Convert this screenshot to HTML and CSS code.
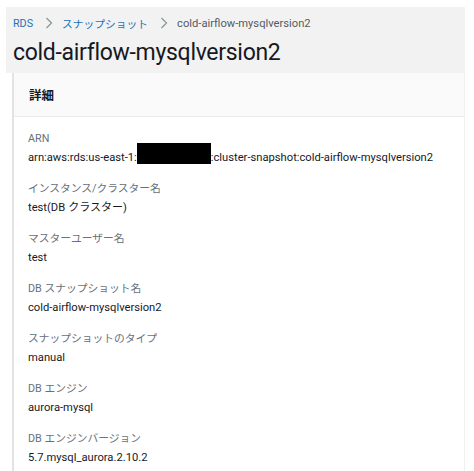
FILE: index.html
```html
<!DOCTYPE html>
<html lang="ja">
  <head>
    <meta charset="UTF-8" />
    <meta name="viewport" content="width=device-width, initial-scale=1.0" />
    <title>cold-airflow-mysqlversion2 | RDS</title>
    <link rel="stylesheet" href="styles.css">
  </head>
  <body>
    <div class="page">
      <div class="header">
        <nav class="breadcrumb">
          <a href="#">RDS</a>
          <span class="sep">
            <svg width="8" height="12" viewBox="0 0 8 12"><path d="M1.5 1l5 5-5 5" fill="none" stroke="#879596" stroke-width="1.2"/></svg>
          </span>
          <a href="#">スナップショット</a>
          <span class="sep">
            <svg width="8" height="12" viewBox="0 0 8 12"><path d="M1.5 1l5 5-5 5" fill="none" stroke="#879596" stroke-width="1.2"/></svg>
          </span>
          <span class="current">cold-airflow-mysqlversion2</span>
        </nav>
        <h1>cold-airflow-mysqlversion2</h1>
      </div>

      <div class="card">
        <div class="card-header">
          <h2>詳細</h2>
        </div>
        <div class="card-body">
          <div class="field">
            <div class="label">ARN</div>
            <div class="value">arn:aws:rds:us-east-1:<span class="masked"></span>:cluster-snapshot:cold-airflow-mysqlversion2</div>
          </div>
          <div class="field">
            <div class="label">インスタンス/クラスター名</div>
            <div class="value">test(DB <span class="ja">クラスター)</span></div>
          </div>
          <div class="field">
            <div class="label">マスターユーザー名</div>
            <div class="value">test</div>
          </div>
          <div class="field">
            <div class="label">DB スナップショット名</div>
            <div class="value">cold-airflow-mysqlversion2</div>
          </div>
          <div class="field">
            <div class="label">スナップショットのタイプ</div>
            <div class="value">manual</div>
          </div>
          <div class="field">
            <div class="label">DB エンジン</div>
            <div class="value">aurora-mysql</div>
          </div>
          <div class="field">
            <div class="label">DB エンジンバージョン</div>
            <div class="value">5.7.mysql_aurora.2.10.2</div>
          </div>
        </div>
      </div>
    </div>
  </body>
</html>
```

FILE: styles.css
```css
body {
  margin: 0;
  background: white;
  font-family: Roboto, "Noto Sans CJK JP", sans-serif;
  color: #16191f;
  overflow: hidden;
}
.page {
  margin: 7px 9px 0 6px;
}
.header {
  background: #f2f2f2;
  padding: 8px 0 0 7px;
  height: 58px;
}
.breadcrumb {
  display: flex;
  align-items: center;
  font-size: 10.75px;
  height: 16px;
}
.breadcrumb a {
  color: #1c73b5;
  text-decoration: none;
}
.sep {
  display: flex;
  margin: 0 9px 0 12px;
}
.current {
  color: #545b64;
  font-size: 11.2px;
}
h1 {
  margin: 6px 0 0;
  font-size: 23px;
  font-weight: 400;
  line-height: 32px;
  letter-spacing: -0.3px;
}
.card {
  margin-left: 6px;
  border-left: 2px solid #e2e4e4;
  border-right: 1px solid #f0f0f0;
}
.card-header {
  background: #fafafa;
  height: 43px;
  border-bottom: 1px solid #ececec;
  display: flex;
  align-items: center;
  padding-left: 15px;
}
h2 {
  margin: 0;
  font-size: 12.5px;
  font-weight: 700;
}
.card-body {
  padding: 12px 0 0 14px;
}
.field {
  height: 50px;
}
.label {
  color: #687078;
  font-size: 10.75px;
  line-height: 19px;
}
.value {
  font-size: 11.2px;
  line-height: 19px;
  display: flex;
  align-items: flex-start;
}
.value .ja {
  font-size: 11px;
  margin-left: 3px;
}
.masked {
  width: 74px;
  height: 21px;
  margin-top: -5px;
  background: black;
}
```
